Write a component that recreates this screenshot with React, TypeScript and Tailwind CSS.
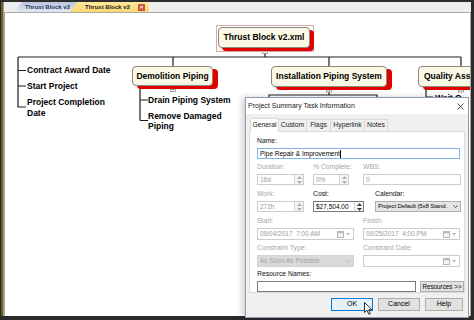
import React from "react";

const UI = "font-['Liberation_Sans',Arial,sans-serif]";

function Arrows({ disabled }: { disabled?: boolean }) {
  const c = disabled ? "#b0b0b0" : "#404040";
  return (
    <div className="flex h-full w-[9px] shrink-0 flex-col items-center justify-center gap-[2px] border-l border-[#d4d4d4] bg-[#f4f4f4]">
      <svg width="5" height="3" viewBox="0 0 5 3"><path d="M0 3L2.5 0L5 3Z" fill={c} /></svg>
      <svg width="5" height="3" viewBox="0 0 5 3"><path d="M0 0L2.5 3L5 0Z" fill={c} /></svg>
    </div>
  );
}

function CalDrop({ disabled }: { disabled?: boolean }) {
  const c = disabled ? "#b8b8b8" : "#909090";
  return (
    <div className="flex h-full shrink-0 items-center gap-[2px] pr-[3px]">
      <svg width="7" height="7" viewBox="0 0 7 7">
        <rect x="0.5" y="0.5" width="6" height="6" fill="#f6f6f6" stroke={c} />
        <rect x="0.5" y="0.5" width="6" height="1.8" fill={c} />
      </svg>
      <svg width="4" height="3" viewBox="0 0 4 3"><path d="M0 0L2 2.5L4 0Z" fill={c} /></svg>
    </div>
  );
}

function Label({ children, dim, w }: { children: React.ReactNode; dim?: boolean; w: string }) {
  return (
    <div className={`${w} h-[8px] text-[6.8px] leading-[8px] whitespace-nowrap ${dim ? "text-[#a6a6a6]" : "text-[#111]"}`}>
      {children}
    </div>
  );
}

export default function App() {
  return (
    <div className={`relative h-[320px] w-[474px] overflow-hidden bg-[#2a2a2a] ${UI}`}>
      <div className="h-[2px] bg-[#2d2d2d]" />
      <div className="flex h-[314px]">
        {/* left frame */}
        <div className="flex w-[4px]">
          <div className="w-[1px] bg-[#2b2618]" />
          <div className="w-[2px] bg-[#6e5e34]" />
          <div className="w-[1px] bg-[#9a9a8a]" />
        </div>
        {/* main */}
        <div className="flex w-[467px] flex-col">
          {/* tab strip */}
          <div className="flex h-[10px] items-stretch bg-[#eeeeee]">
            <div className="ml-[11px] flex w-[62px] items-center justify-center whitespace-nowrap bg-gradient-to-b from-[#b9c5de] to-[#e2e7f1] pl-[3px] text-[6px] font-bold text-[#24345c] [clip-path:polygon(7px_0,100%_0,100%_100%,0_100%)]">
              Thrust Block v2
            </div>
            <div className="ml-[-7px] flex w-[79px] items-center whitespace-nowrap bg-gradient-to-b from-[#fde89e] to-[#fbd86c] pl-[15px] text-[6px] font-bold text-[#1a1a1a] [clip-path:polygon(7px_0,100%_0,100%_100%,0_100%)]">
              <span>Thrust Block v2</span>
              <span className="ml-[8px] flex h-[7px] w-[7px] items-center justify-center bg-[#c8583f] text-[6px] leading-none text-white">
                ×
              </span>
            </div>
          </div>
          {/* canvas */}
          <div className="relative h-[304px] overflow-hidden border-l border-r border-t border-[#a9a9a9] bg-white">
            <svg className="absolute left-0 top-0" width="465" height="303" viewBox="5 13 465 303">
              <g stroke="#1c1c1c" strokeWidth="1.2" fill="none">
                <path d="M265 52V57M18 57H461M18 57V107.5M18 70.5H26M18 86H26M18 107H26" />
                <path d="M173 57V66M329 57V66M461 57V66" />
                <path d="M140 88V120.5M140 100H148M140 120.5H148" />
                <path d="M329 92V95M269 100V95H377V100" />
                <path d="M426 88V100M426 97H433" />
              </g>
              <g fill="#fff" stroke="#8c8c8c" strokeWidth="0.8">
                <rect x="262.5" y="49.5" width="5" height="4" />
                <rect x="170.5" y="87.5" width="5" height="4" />
                <rect x="326.5" y="88" width="5" height="4" />
                <rect x="458.5" y="88" width="5" height="4" />
              </g>
              <g stroke="#666" strokeWidth="0.8">
                <path d="M263.5 51.5H266.5M171.5 89.5H174.5M327.5 90H330.5M459.5 90H462.5" />
              </g>
            </svg>

            {/* root selection */}
            <div className="absolute left-[211px] top-[12px] h-[27px] w-[98px] border border-[#e3a3ad]" />
            <div className="absolute left-[213px] top-[14px] flex h-[21px] w-[92px] items-center justify-center rounded-[4px] border border-[#8a8a80] bg-[#fbf8e6] text-[8.5px] font-bold text-black shadow-[4px_3px_0_#e10000]">
              Thrust Block v2.xml
            </div>

            <div className="absolute left-[127px] top-[53px] flex h-[20px] w-[81px] items-center justify-center rounded-[4px] border border-[#8a8a80] bg-[#fbf8e6] text-[8.5px] font-bold text-black shadow-[5px_3px_0_#e10000]">
              Demolition Piping
            </div>
            <div className="absolute left-[266px] top-[53px] flex h-[21px] w-[116px] items-center justify-center rounded-[4px] border border-[#8a8a80] bg-[#fbf8e6] text-[8.5px] font-bold text-black shadow-[5px_3px_0_#e10000]">
              Installation Piping System
            </div>
            <div className="absolute left-[413px] top-[53px] flex h-[21px] w-[100px] items-center whitespace-nowrap rounded-[4px] border border-[#8a8a80] bg-[#fbf8e6] pl-[5px] text-[8.5px] font-bold text-black shadow-[5px_3px_0_#e10000]">
              Quality Assurance
            </div>

            <div className="absolute left-[22px] top-[52px] text-[8.5px] font-bold leading-[10.5px] text-black">Contract Award Date</div>
            <div className="absolute left-[22px] top-[67.5px] text-[8.5px] font-bold leading-[10.5px] text-black">Start Project</div>
            <div className="absolute left-[22px] top-[84px] text-[8.5px] font-bold leading-[10.5px] text-black">
              Project Completion
              <br />
              Date
            </div>
            <div className="absolute left-[143px] top-[82px] text-[8.5px] font-bold leading-[10.5px] text-black">Drain Piping System</div>
            <div className="absolute left-[143px] top-[97.5px] text-[8.5px] font-bold leading-[10.5px] text-black">
              Remove Damaged
              <br />
              Piping
            </div>
            <div className="absolute left-[430px] top-[80px] text-[8.5px] font-bold leading-[10.5px] text-black">Wait Q</div>
          </div>
        </div>
        {/* right frame */}
        <div className="w-[3px] bg-[#2a2a2a]" />
      </div>
      <div className="h-[4px] bg-[#2a2a2a]" />

      {/* dialog */}
      <div className="absolute left-[245px] top-[97px] flex h-[221px] w-[224px] flex-col border border-[#8b9bb4] bg-[#f0f0f0] shadow-[-3px_0_6px_rgba(0,0,0,0.18)]">
        <div className="flex h-[16px] items-center justify-between bg-white pl-[2px] pr-[4px]">
          <span className="text-[7px] text-[#222]">Project Summary Task Information</span>
          <svg width="7" height="7" viewBox="0 0 7 7"><path d="M0.5 0.5L6.5 6.5M6.5 0.5L0.5 6.5" stroke="#333" strokeWidth="0.9" /></svg>
        </div>
        {/* tabs */}
        <div className="mt-[4px] flex h-[13px] items-end pl-[4px] text-[6.8px] text-[#222]">
          <div className="z-10 mb-[-1px] flex h-[14px] w-[29px] items-center justify-center border border-b-0 border-[#d9d9d9] bg-white">General</div>
          <div className="flex h-[12px] w-[28px] items-center justify-center border-r border-t border-[#d9d9d9]">Custom</div>
          <div className="flex h-[12px] w-[24px] items-center justify-center border-r border-t border-[#d9d9d9]">Flags</div>
          <div className="flex h-[12px] w-[34px] items-center justify-center border-r border-t border-[#d9d9d9]">Hyperlink</div>
          <div className="flex h-[12px] w-[23px] items-center justify-center border-r border-t border-[#d9d9d9]">Notes</div>
        </div>
        {/* panel */}
        <div className="ml-[3px] flex h-[162px] w-[216px] flex-col border border-[#d9d9d9] bg-white pl-[7px] pt-[5px]">
          <Label w="w-[60px]">Name:</Label>
          <div className="mt-[3px] flex h-[11px] w-[203px] items-center border border-[#7eb4ea] pl-[2px] text-[6.5px] text-black">
            Pipe Repair &amp; Improvement<span className="ml-[0.5px] h-[8px] w-[1px] bg-black" />
          </div>

          <div className="mt-[4px] flex">
            <Label dim w="w-[56px]">Duration:</Label>
            <Label dim w="w-[50px]">% Complete:</Label>
            <Label dim w="w-[60px]">WBS:</Label>
          </div>
          <div className="mt-[3px] flex h-[11px] text-[6.5px]">
            <div className="flex w-[47px] items-center justify-between border border-[#cccccc] pl-[2px] text-[#9a9a9a]">16d<Arrows disabled /></div>
            <div className="ml-[9px] flex w-[36px] items-center justify-between border border-[#cccccc] pl-[2px] text-[#9a9a9a]">0%<Arrows disabled /></div>
            <div className="ml-[14px] flex w-[98px] items-center border border-[#cccccc] pl-[2px] text-[#9a9a9a]">0</div>
          </div>

          <div className="mt-[5px] flex">
            <Label dim w="w-[56px]">Work:</Label>
            <Label w="w-[62px]">Cost:</Label>
            <Label w="w-[60px]">Calendar:</Label>
          </div>
          <div className="mt-[3px] flex h-[11px] text-[6.5px]">
            <div className="flex w-[47px] items-center justify-between border border-[#cccccc] pl-[2px] text-[#9a9a9a]">272h<Arrows disabled /></div>
            <div className="ml-[9px] flex w-[51px] items-center justify-between whitespace-nowrap border border-[#7a7a7a] pl-[2px] text-black">$27,504.00<Arrows /></div>
            <div className="ml-[11px] flex w-[86px] items-center justify-between border border-[#adadad] bg-[#e5e5e5] pl-[2px] pr-[2px] text-[6px] text-black">
              <span className="whitespace-nowrap tracking-[-0.1px]">Project Default (5x8 Stand.</span>
              <svg className="shrink-0" width="5" height="3" viewBox="0 0 5 3"><path d="M0.3 0.3L2.5 2.6L4.7 0.3" stroke="#333" strokeWidth="0.8" fill="none" /></svg>
            </div>
          </div>

          <div className="mt-[5px] flex">
            <Label dim w="w-[106px]">Start:</Label>
            <Label dim w="w-[60px]">Finish:</Label>
          </div>
          <div className="mt-[3px] flex h-[12px] text-[6.5px]">
            <div className="flex w-[97px] items-center justify-between border border-[#cccccc] pl-[2px] text-[#9a9a9a]">
              <span className="whitespace-pre">09/04/2017  7:00 AM</span><CalDrop disabled />
            </div>
            <div className="ml-[9px] flex w-[97px] items-center justify-between border border-[#cccccc] pl-[2px] text-[#9a9a9a]">
              <span className="whitespace-pre">09/25/2017  4:00 PM</span><CalDrop disabled />
            </div>
          </div>

          <div className="mt-[4px] flex">
            <Label dim w="w-[106px]">Constraint Type:</Label>
            <Label dim w="w-[60px]">Constraint Date:</Label>
          </div>
          <div className="mt-[3px] flex h-[12px] text-[6.5px]">
            <div className="flex w-[97px] items-center justify-between border border-[#d4d4d4] bg-[#dadada] pl-[2px] pr-[3px] text-[#a2a2a2]">
              As Soon As Possible
              <svg width="5" height="3" viewBox="0 0 5 3"><path d="M0.3 0.3L2.5 2.6L4.7 0.3" stroke="#b0b0b0" strokeWidth="0.8" fill="none" /></svg>
            </div>
            <div className="ml-[9px] flex w-[97px] items-center justify-end border border-[#cccccc]"><CalDrop disabled /></div>
          </div>

          <div className="mt-[3px]">
            <Label w="w-[80px]">Resource Names:</Label>
          </div>
          <div className="mt-[3px] flex h-[11px] text-[6.3px]">
            <div className="w-[159px] border border-[#7a7a7a]" />
            <div className="ml-[4px] flex w-[44px] items-center justify-center whitespace-nowrap border border-[#adadad] bg-[#e1e1e1] text-black">Resources &gt;&gt;</div>
          </div>
        </div>
        {/* buttons */}
        <div className="relative mt-[5px] flex h-[13px] justify-end gap-[5px] pr-[5px] text-[7px] text-black">
          <div className="flex w-[42px] items-center justify-center border border-[#0078d7] bg-[#e5f1fb]">OK</div>
          <div className="flex w-[42px] items-center justify-center border border-[#adadad] bg-[#e1e1e1]">Cancel</div>
          <div className="flex w-[38px] items-center justify-center border border-[#adadad] bg-[#e1e1e1]">Help</div>
          <svg className="absolute left-[118px] top-[4px]" width="9" height="13" viewBox="0 0 9 13">
            <path d="M0.5 0.5V10.5L3 8.3L4.8 12.3L6.3 11.6L4.6 7.8H8Z" fill="#fff" stroke="#000" strokeWidth="0.8" strokeLinejoin="round" />
          </svg>
        </div>
      </div>
    </div>
  );
}
